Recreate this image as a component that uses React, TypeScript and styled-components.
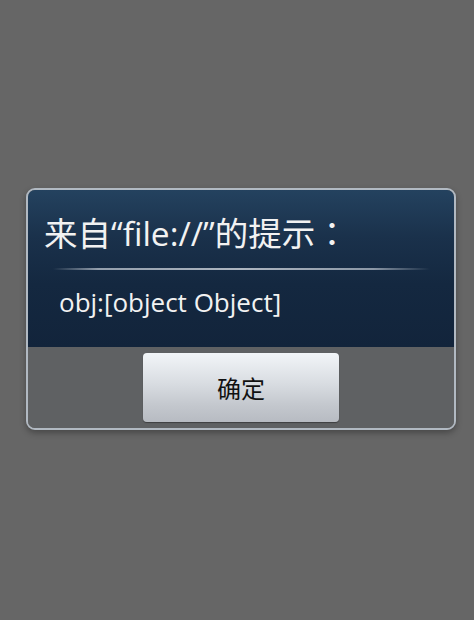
import React from "react";
import styled, { createGlobalStyle } from "styled-components";

const Global = createGlobalStyle`
  html, body {
    margin: 0;
    padding: 0;
    background: #666666;
  }
  body {
    font-family: "Open Sans", "Noto Sans CJK SC", sans-serif;
  }
  #root {
    min-height: 620px;
  }
`;

const Screen = styled.div`
  width: 474px;
  height: 620px;
  background: #666666;
  padding-top: 188px;
  box-sizing: border-box;
`;

const Dialog = styled.div`
  margin-left: 26px;
  width: 430px;
  box-sizing: border-box;
  border: 2px solid #b1b9c2;
  border-radius: 9px;
  overflow: hidden;
  box-shadow: 0 3px 6px rgba(0, 0, 0, 0.3);
  display: flex;
  flex-direction: column;
`;

const Header = styled.div`
  background: linear-gradient(to bottom, #24425f 0%, #1a314b 30%, #142840 60%, #12243b 100%);
  display: flex;
  flex-direction: column;
`;

const Title = styled.div`
  padding: 8px 14px 0 16px;
  height: 70px;
  line-height: 70px;
  font-family: "Open Sans", "Noto Sans CJK JP", sans-serif;
  font-size: 33.5px;
  color: #f2f2f2;
  white-space: nowrap;
  overflow: hidden;
`;

const Divider = styled.div`
  height: 2px;
  margin: 0 24px 0 25px;
  background: linear-gradient(
    to right,
    rgba(180, 190, 200, 0) 0%,
    rgba(190, 198, 208, 0.75) 12%,
    rgba(200, 206, 214, 0.85) 50%,
    rgba(190, 198, 208, 0.7) 85%,
    rgba(180, 190, 200, 0) 100%
  );
`;

const Message = styled.div`
  padding: 15px 31px 27px 31px;
  line-height: 35px;
  font-size: 26px;
  color: #f2f2f2;
`;

const Footer = styled.div`
  background: #5f6163;
  padding: 6px 0;
  display: flex;
  justify-content: center;
`;

const Button = styled.button`
  width: 196px;
  height: 69px;
  border: none;
  border-radius: 4px;
  background: linear-gradient(to bottom, #f2f5f8 0%, #d8dce1 45%, #c4c8ce 75%, #b7bbc2 100%);
  box-shadow: 0 1px 1px rgba(0, 0, 0, 0.35);
  font-family: "Open Sans", "Noto Sans CJK SC", sans-serif;
  font-size: 24px;
  color: #111111;
  padding: 0;
  cursor: pointer;
`;

export default function App() {
  return (
    <>
      <Global />
      <Screen>
        <Dialog>
          <Header>
            <Title>来自“file://”的提示：</Title>
            <Divider />
            <Message>obj:[object Object]</Message>
          </Header>
          <Footer>
            <Button>确定</Button>
          </Footer>
        </Dialog>
      </Screen>
    </>
  );
}
